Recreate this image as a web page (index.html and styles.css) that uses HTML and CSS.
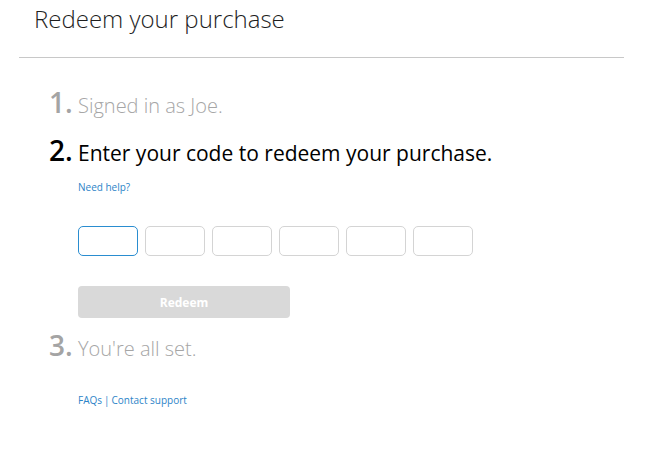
FILE: index.html
```html
<!DOCTYPE html>
<html>
<head>
<meta charset="utf-8">
<link rel="stylesheet" href="styles.css">
</head>
<body>
<div class="page">
  <header class="header">
    <h1 class="title">Redeem your purchase</h1>
  </header>
  <main class="steps">
    <div class="step step-done">
      <span class="num">1.</span>
      <span class="label">Signed in as Joe.</span>
    </div>
    <div class="step step-active">
      <span class="num">2.</span>
      <span class="label">Enter your code to redeem your purchase.</span>
    </div>
    <div class="step-body">
      <a class="link help" href="#">Need help?</a>
      <div class="code-row">
        <input class="code focus" type="text">
        <input class="code" type="text">
        <input class="code" type="text">
        <input class="code" type="text">
        <input class="code" type="text">
        <input class="code" type="text">
      </div>
      <button class="redeem" type="button">Redeem</button>
    </div>
    <div class="step step-todo">
      <span class="num">3.</span>
      <span class="label">You're all set.</span>
    </div>
    <div class="footer-links">
      <a class="link" href="#">FAQs</a><span class="sep">|</span><a class="link" href="#">Contact support</a>
    </div>
  </main>
</div>
</body>
</html>
```

FILE: styles.css
```css
html, body {
  margin: 0;
  padding: 0;
  background: #ffffff;
}
body {
  font-family: "Open Sans", "Noto Sans", sans-serif;
  color: #000;
}
.page {
  width: 648px;
}
.header {
  margin: 0 24px 0 19px;
  border-bottom: 1px solid #c8c8c8;
  height: 58px;
  box-sizing: border-box;
}
.title {
  margin: 0;
  padding: 1px 0 0 15px;
  font-size: 24px;
  font-weight: 300;
  line-height: 36px;
  color: #1e1e1e;
}
.steps {
  padding-left: 49px;
  padding-top: 20px;
}
.step {
  display: flex;
  align-items: baseline;
  height: 48px;
}
.num {
  width: 29px;
  font-size: 28px;
  font-weight: 600;
  line-height: 48px;
}
.label {
  font-size: 21px;
  line-height: 48px;
}
.step-done .num, .step-todo .num {
  color: #a4a4a4;
}
.step-done .label, .step-todo .label {
  color: #a6a6a6;
  font-weight: 300;
  font-size: 20px;
}
.step-active .num, .step-active .label {
  color: #000;
}
.step-body {
  padding-left: 29px;
  display: flex;
  flex-direction: column;
  align-items: flex-start;
}
.link {
  color: #2d84c8;
  text-decoration: none;
  font-size: 10px;
}
.help {
  margin-top: 6px;
  line-height: 14px;
}
.code-row {
  display: flex;
  gap: 7px;
  margin-top: 32px;
}
.code {
  width: 60px;
  height: 30px;
  box-sizing: border-box;
  border: 1px solid #d4d4d4;
  border-radius: 5px;
  background: #fff;
  margin: 0;
  padding: 0;
  outline: none;
}
.code.focus {
  border-color: #2a8dd0;
}
.redeem {
  margin-top: 30px;
  width: 212px;
  height: 32px;
  border: none;
  border-radius: 4px;
  background: #d9d9d9;
  color: #fff;
  font-family: "Open Sans", "Noto Sans", sans-serif;
  font-size: 12px;
  font-weight: 700;
  padding: 0;
}
.step-todo {
  margin-top: 3px;
}
.footer-links {
  padding-left: 29px;
  margin-top: 24px;
  font-size: 10px;
  line-height: 14px;
}
.sep {
  color: #2d84c8;
  margin: 0 2px;
}
```
